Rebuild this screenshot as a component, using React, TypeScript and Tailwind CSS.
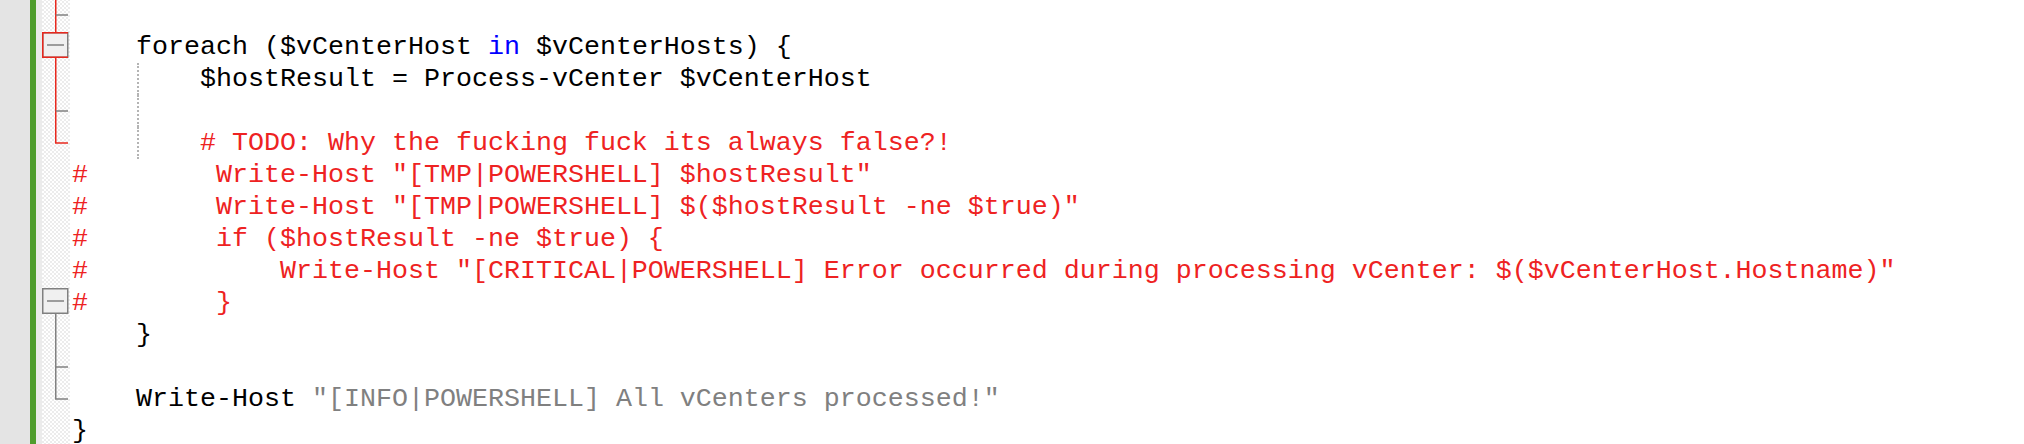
import { ReactNode } from "react";

type FoldKind =
  | "none"
  | "redTop"
  | "redBox"
  | "red"
  | "redTick"
  | "redEnd"
  | "grayBox"
  | "gray"
  | "grayTick"
  | "grayEnd";

const RED = "#e8281e";
const GRAY = "#808080";

function Fold({ kind }: { kind: FoldKind }) {
  const red = kind.startsWith("red");
  const c = red ? RED : GRAY;
  return (
    <svg width="28" height="32" viewBox="0 0 28 32" className="block">
      {(kind === "red" || kind === "gray" || kind === "redTop" || kind === "redTick" || kind === "grayTick") && (
        <line x1="13.75" y1="0" x2="13.75" y2="32" stroke={c} strokeWidth="1.5" />
      )}
      {(kind === "redTop" || kind === "redTick" || kind === "grayTick") && (
        <line x1="13.75" y1="16" x2="26" y2="16" stroke={GRAY} strokeWidth="1.5" />
      )}
      {(kind === "redEnd" || kind === "grayEnd") && (
        <path d="M13.75 0 V16 H26" fill="none" stroke={c} strokeWidth="1.5" />
      )}
      {(kind === "redBox" || kind === "grayBox") && (
        <>
          {red && <line x1="13.75" y1="0" x2="13.75" y2="1" stroke={RED} strokeWidth="1.5" />}
          <line x1="13.75" y1="26" x2="13.75" y2="32" stroke={c} strokeWidth="1.5" />
          <rect x="0.75" y="1.75" width="25" height="24.5" fill="#f0f0f0" stroke={GRAY} strokeWidth="1.5" />
          {red && (
            <path d="M26 1.75 H0.75 V26.25 H26" fill="none" stroke={RED} strokeWidth="1.5" />
          )}
          <line x1="5" y1="14" x2="22" y2="14" stroke={GRAY} strokeWidth="1.5" />
        </>
      )}
    </svg>
  );
}

const Blue = ({ children }: { children: ReactNode }) => (
  <span className="text-[#0000ff]">{children}</span>
);
const Str = ({ children }: { children: ReactNode }) => (
  <span className="text-[#808080]">{children}</span>
);
const Cmt = ({ children }: { children: ReactNode }) => (
  <span className="text-[#ee2222]">{children}</span>
);

const ROWS: { fold: FoldKind; guide?: boolean; text: ReactNode }[] = [
  { fold: "redTop", text: "" },
  {
    fold: "redBox",
    text: (
      <>
        {"    foreach ($vCenterHost "}
        <Blue>in</Blue>
        {" $vCenterHosts) {"}
      </>
    ),
  },
  { fold: "red", guide: true, text: "        $hostResult = Process-vCenter $vCenterHost" },
  { fold: "redTick", guide: true, text: "" },
  { fold: "redEnd", guide: true, text: <Cmt>{"        # TODO: Why the fucking fuck its always false?!"}</Cmt> },
  { fold: "none", text: <Cmt>{'#        Write-Host "[TMP|POWERSHELL] $hostResult"'}</Cmt> },
  { fold: "none", text: <Cmt>{'#        Write-Host "[TMP|POWERSHELL] $($hostResult -ne $true)"'}</Cmt> },
  { fold: "none", text: <Cmt>{"#        if ($hostResult -ne $true) {"}</Cmt> },
  {
    fold: "none",
    text: (
      <Cmt>
        {'#            Write-Host "[CRITICAL|POWERSHELL] Error occurred during processing vCenter: $($vCenterHost.Hostname)"'}
      </Cmt>
    ),
  },
  { fold: "grayBox", text: <Cmt>{"#        }"}</Cmt> },
  { fold: "gray", text: "    }" },
  { fold: "grayTick", text: "" },
  {
    fold: "grayEnd",
    text: (
      <>
        {"    Write-Host "}
        <Str>{'"[INFO|POWERSHELL] All vCenters processed!"'}</Str>
      </>
    ),
  },
  { fold: "none", text: "}" },
];

export default function App() {
  return (
    <div className="flex h-[444px] w-[2024px] overflow-hidden bg-white">
      {/* left margins */}
      <div className="w-[30px] shrink-0 bg-[#e4e4e4]" />
      <div className="w-[6px] shrink-0 bg-[#4f9d2d]" />
      <div className="w-[6px] shrink-0 bg-[#ebebeb]" />

      {/* fold margin + code */}
      <div className="-mt-px flex flex-1 flex-col">
        {ROWS.map((row, i) => (
          <div key={i} className="flex h-[32px] shrink-0">
            <div className="w-[28px] shrink-0 bg-[repeating-conic-gradient(#ececec_0_25%,#ffffff_0_50%)] bg-size-[4px_4px]">
              <Fold kind={row.fold} />
            </div>
            <div className="relative flex-1 pl-[2px] whitespace-pre font-['Liberation_Mono','Courier_New',monospace] text-[26.67px] leading-[32px] text-black">
              {row.guide && (
                <span className="absolute top-0 left-[67px] h-full border-l-2 border-dotted border-[#b4b4b4]" />
              )}
              {row.text}
            </div>
          </div>
        ))}
      </div>
    </div>
  );
}
